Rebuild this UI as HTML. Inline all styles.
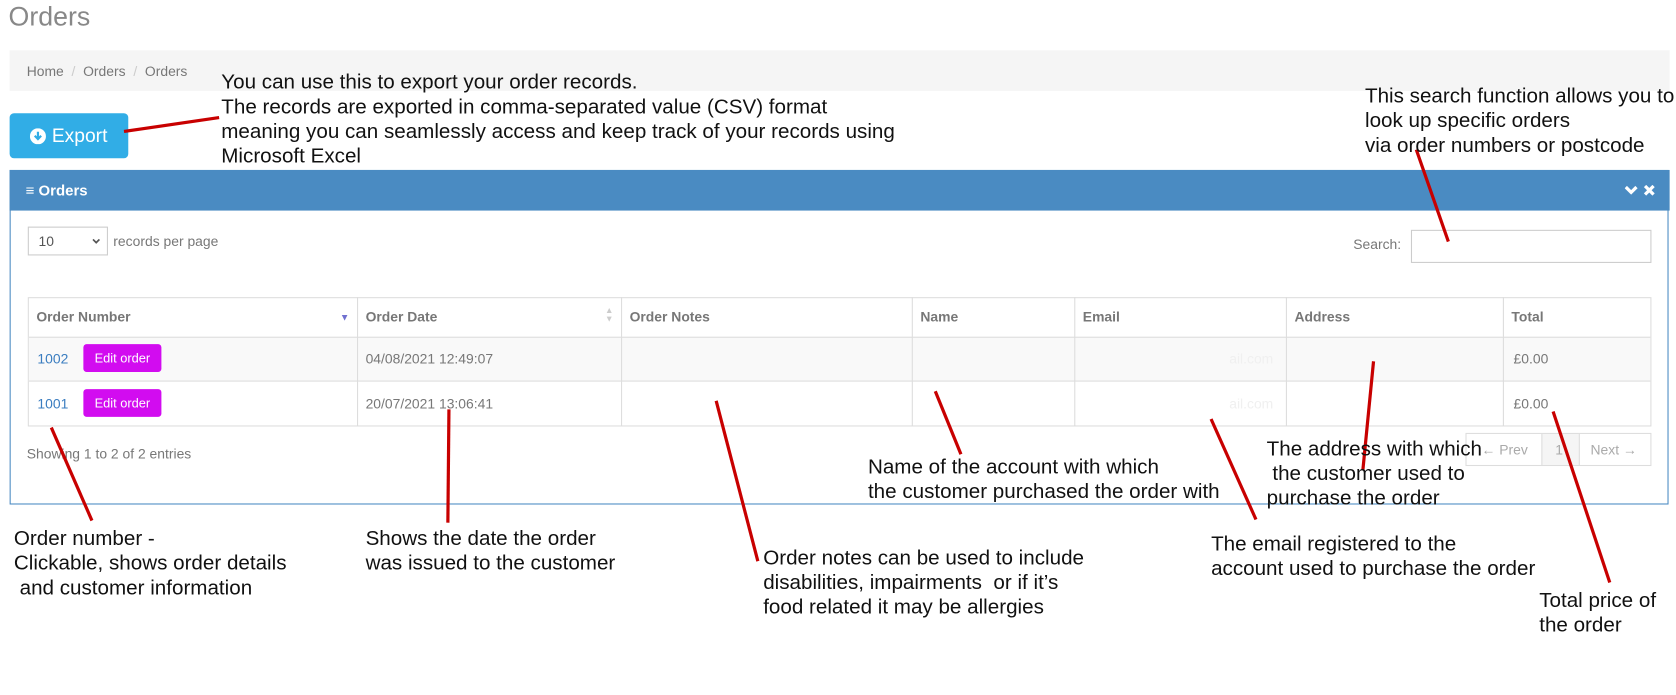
<!DOCTYPE html>
<html><head><meta charset="utf-8"><style>
html,body{margin:0;padding:0;background:#fff;overflow:hidden;width:1676px;height:694px}
#w{position:absolute;left:0;top:0;width:1568px;height:650px;transform:scale(1.0689);transform-origin:0 0;font-family:"Liberation Sans",Arial,sans-serif}
.a{position:absolute}
.ann{position:absolute;font-size:19.3px;line-height:23px;color:#111;white-space:nowrap}
.th{position:absolute;top:278px;height:37px;line-height:37px;font-size:13px;font-weight:bold;color:#777;padding-left:8px;box-sizing:border-box}
.td{position:absolute;font-size:13px;color:#777}
.eb{position:absolute;left:78px;width:73px;height:26px;background:#d20cf0;color:#fff;font-size:12px;line-height:26px;text-align:center;border-radius:3px}
</style></head><body><div id="w">
<div class="a" style="left:8px;top:2px;font-size:25px;color:#888;font-weight:300">Orders</div>
<div class="a" style="left:9px;top:47px;width:1553px;height:38px;background:#f5f5f5"></div>
<div class="a" style="left:25px;top:59px;font-size:13px;color:#777">Home <span style="color:#ccc">&nbsp;/&nbsp;</span> Orders <span style="color:#ccc">&nbsp;/&nbsp;</span> Orders</div>
<div class="a" style="left:9px;top:106px;width:111px;height:42px;background:#31ade6;border-radius:4px;color:#fff;font-size:18px;line-height:42px;text-align:center"><svg width="15" height="15" viewBox="0 0 16 16" style="vertical-align:-2px"><circle cx="8" cy="8" r="8" fill="#fff"/><path d="M8 3.5v7M4.8 7.5L8 10.8 11.2 7.5" stroke="#31ade6" stroke-width="2.2" fill="none"/></svg> Export</div>
<div class="a" style="left:9px;top:159px;width:1552px;height:313px;border:1px solid #4a8bc2;box-sizing:border-box"></div>
<div class="a" style="left:9px;top:159px;width:1553px;height:38px;background:#4a8bc2;color:#fff;font-size:14px;font-weight:bold;line-height:38px"><span style="margin-left:15px">&#8801; Orders</span>
<svg class="a" style="right:12px;top:14px" width="30" height="11" viewBox="0 0 30 11"><path d="M1 2l5 5 5-5" stroke="#fff" stroke-width="3" fill="none"/><path d="M19 1l8 8M27 1l-8 8" stroke="#fff" stroke-width="3"/></svg></div>
<div class="a" style="left:26px;top:212px;width:75px;height:27px;border:1px solid #ccc;box-sizing:border-box;font-size:13px;line-height:25px;padding-left:9px;color:#555">10<svg class="a" style="right:6px;top:10px" width="8" height="6" viewBox="0 0 8 6"><path d="M1 1l3 3 3-3" stroke="#555" stroke-width="1.6" fill="none"/></svg></div>
<div class="a" style="left:106px;top:218px;font-size:13px;color:#777">records per page</div>
<div class="a" style="left:1266px;top:221px;font-size:13px;color:#777">Search:</div>
<div class="a" style="left:1320px;top:215px;width:225px;height:31px;border:1px solid #ccc;box-sizing:border-box"></div>
<div class="a" style="left:26px;top:278px;width:1519px;height:121px;border:1px solid #ddd;box-sizing:border-box"></div>
<div class="a" style="left:27px;top:315px;width:1517px;height:42px;background:#f9f9f9;border-top:1px solid #ddd;border-bottom:1px solid #ddd;box-sizing:border-box"></div>
<div class="a" style="left:334px;top:278px;width:1px;height:121px;background:#ddd"></div>
<div class="a" style="left:581px;top:278px;width:1px;height:121px;background:#ddd"></div>
<div class="a" style="left:853px;top:278px;width:1px;height:121px;background:#ddd"></div>
<div class="a" style="left:1005px;top:278px;width:1px;height:121px;background:#ddd"></div>
<div class="a" style="left:1203px;top:278px;width:1px;height:121px;background:#ddd"></div>
<div class="a" style="left:1406px;top:278px;width:1px;height:121px;background:#ddd"></div>
<div class="th" style="left:26px">Order Number</div><div class="a" style="left:318px;top:292px;font-size:9px;color:#7070d0">&#9660;</div>
<div class="th" style="left:334px">Order Date</div><div class="a" style="left:566px;top:287px;font-size:8px;line-height:8px;color:#ccc">&#9650;<br>&#9660;</div>
<div class="th" style="left:581px">Order Notes</div>
<div class="th" style="left:853px">Name</div>
<div class="th" style="left:1005px">Email</div>
<div class="th" style="left:1203px">Address</div>
<div class="th" style="left:1406px">Total</div>
<div class="td" style="left:35px;top:328px;color:#3a7dc0">1002</div><div class="eb" style="top:322px">Edit order</div>
<div class="td" style="left:35px;top:370px;color:#3a7dc0">1001</div><div class="eb" style="top:364px">Edit order</div>
<div class="td" style="left:342px;top:328px">04/08/2021 12:49:07</div>
<div class="td" style="left:342px;top:370px">20/07/2021 13:06:41</div>
<div class="td" style="left:1416px;top:328px">£0.00</div>
<div class="td" style="left:1416px;top:370px">£0.00</div>
<div class="td" style="left:1150px;top:328px;color:#f0f0f0">ail.com</div>
<div class="td" style="left:1150px;top:370px;color:#f0f0f0">ail.com</div>
<div class="td" style="left:25px;top:417px">Showing 1 to 2 of 2 entries</div>
<div class="a" style="left:1371px;top:405px;width:174px;height:31px;border:1px solid #ddd;box-sizing:border-box"></div>
<div class="a" style="left:1442px;top:406px;width:34px;height:29px;background:#f5f5f5;border-left:1px solid #ddd;border-right:1px solid #ddd"></div>
<div class="td" style="left:1386px;top:413px;color:#aaa">&larr; Prev</div>
<div class="td" style="left:1455px;top:413px;color:#aaa">1</div>
<div class="td" style="left:1488px;top:413px;color:#aaa">Next &rarr;</div>
<svg class="a" style="left:0;top:0" width="1568" height="650"><g stroke="#c80000" stroke-width="3" fill="none">
<line x1="116" y1="123" x2="205" y2="110"/>
<line x1="1325" y1="140" x2="1355" y2="226"/>
<line x1="48" y1="400" x2="86" y2="487"/>
<line x1="420" y1="383" x2="419" y2="489"/>
<line x1="670" y1="375" x2="709" y2="525"/>
<line x1="875" y1="366" x2="899" y2="425"/>
<line x1="1133" y1="392" x2="1175" y2="486"/>
<line x1="1285" y1="338" x2="1275" y2="440"/>
<line x1="1453" y1="385" x2="1506" y2="545"/>
</g></svg>
<div class="ann" style="left:207px;top:66px">You can use this to export your order records.<br>The records are exported in comma-separated value (CSV) format<br>meaning you can seamlessly access and keep track of your records using<br>Microsoft Excel</div>
<div class="ann" style="left:1277px;top:79px">This search function allows you to<br>look up specific orders<br>via order numbers or postcode</div>
<div class="ann" style="left:13px;top:493px">Order number -<br>Clickable, shows order details<br>&nbsp;and customer information</div>
<div class="ann" style="left:342px;top:493px">Shows the date the order<br>was issued to the customer</div>
<div class="ann" style="left:714px;top:511px">Order notes can be used to include<br>disabilities, impairments&nbsp; or if it’s<br>food related it may be allergies</div>
<div class="ann" style="left:812px;top:426px">Name of the account with which<br>the customer purchased the order with</div>
<div class="ann" style="left:1133px;top:498px">The email registered to the<br>account used to purchase the order</div>
<div class="ann" style="left:1185px;top:409px">The address with which<br>&nbsp;the customer used to<br>purchase the order</div>
<div class="ann" style="left:1440px;top:551px">Total price of<br>the order</div>
</div></body></html>
